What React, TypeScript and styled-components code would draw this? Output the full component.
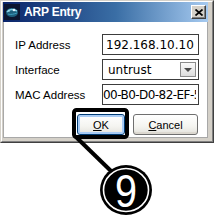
import React from 'react';
import styled, { createGlobalStyle } from 'styled-components';

const GlobalStyle = createGlobalStyle`
    html, body {
        margin: 0;
        padding: 0;
        background: #ffffff;
    }
    body {
        width: 214px;
        height: 218px;
        overflow: hidden;
        font-family: 'Liberation Sans', Arial, sans-serif;
    }
`;

const Page = styled.div`
    position: relative;
    width: 214px;
    height: 218px;
    background: #ffffff;
`;

const Window = styled.div`
    box-sizing: border-box;
    width: 214px;
    border: 1px solid;
    border-color: #d4d0c8 #404040 #404040 #d4d0c8;
`;

const Frame = styled.div`
    display: flex;
    flex-direction: column;
    border: 1px solid;
    border-color: #ffffff #808080 #808080 #ffffff;
    background: #d4d0c8;
    padding: 0 4px 3px 1px;
`;

const TitleBar = styled.div`
    display: flex;
    align-items: center;
    height: 20px;
    padding: 0 2px 0 1px;
    background: linear-gradient(to right, #0a246a 0%, #3a6ea5 55%, #a6caf0 100%);
`;

const TitleText = styled.span`
    flex: 1;
    margin-left: 4px;
    color: #ffffff;
    font-family: 'Liberation Sans', Arial, sans-serif;
    font-weight: bold;
    font-size: 12px;
    letter-spacing: -0.2px;
    line-height: 20px;
`;

const CloseButton = styled.div`
    box-sizing: border-box;
    display: flex;
    align-items: center;
    justify-content: center;
    width: 15px;
    height: 14px;
    background: #d4d0c8;
    border: 1px solid;
    border-color: #ffffff #404040 #404040 #ffffff;
    box-shadow: inset -1px -1px 0 #808080;
`;

const Body = styled.div`
    display: flex;
    flex-direction: column;
    background: #ffffff;
    border: 1px solid #a8a8a8;
    border-top: none;
    padding: 12px 8px 2px 11px;
`;

const Form = styled.div`
    display: grid;
    grid-template-columns: 87px 97px;
    grid-auto-rows: 21px;
    row-gap: 4px;
    align-items: center;
`;

const Label = styled.span`
    font-family: 'Liberation Sans', Arial, sans-serif;
    font-size: 11.5px;
    color: #000000;
`;

const Field = styled.div<{ $pad: number }>`
    box-sizing: border-box;
    display: flex;
    align-items: center;
    height: 21px;
    border: 1px solid #3c3c3c;
    padding-left: ${({ $pad }) => $pad}px;
    padding-right: 2px;
    overflow: hidden;
    white-space: nowrap;
    font-family: 'DejaVu Sans', Verdana, sans-serif;
    font-size: 12px;
    color: #000000;
    background: #ffffff;
`;

const FieldText = styled.span<{ $tight?: boolean }>`
    flex: 1;
    overflow: hidden;
    letter-spacing: ${({ $tight }) => ($tight ? '-0.55px' : '0')};
`;

const DropButton = styled.div`
    box-sizing: border-box;
    display: flex;
    align-items: center;
    justify-content: center;
    width: 16px;
    height: 15px;
    border: 1px solid #8c8c8c;
    background: linear-gradient(#fafafa, #dcdcdc);

    &::after {
        content: '';
        border-left: 4px solid transparent;
        border-right: 4px solid transparent;
        border-top: 4px solid #4a4a4a;
        margin-top: 1px;
    }
`;

const ButtonRow = styled.div`
    display: flex;
    justify-content: flex-end;
    gap: 8px;
    margin-top: 9px;
    padding-right: 1px;
`;

const Button = styled.div<{ $focused?: boolean; $width: number }>`
    box-sizing: border-box;
    display: flex;
    align-items: center;
    justify-content: center;
    width: ${({ $width }) => $width}px;
    height: 21px;
    border: 1px solid ${({ $focused }) => ($focused ? '#003c74' : '#6f6f6f')};
    border-radius: 3px;
    background: linear-gradient(#ffffff 0%, #f4f4f0 60%, #e4e2dc 100%);
    box-shadow: ${({ $focused }) =>
        $focused ? 'inset 0 0 0 2px #a8cbf5' : 'inset 0 -2px 0 #dcd8d0'};
    font-family: 'Liberation Sans', Arial, sans-serif;
    font-size: 11px;
    color: #000000;
`;

const Mnemonic = styled.span`
    text-decoration: underline;
    text-underline-offset: 1px;
`;

const Callout = styled.svg`
    position: absolute;
    left: 0;
    top: 0;
    pointer-events: none;
`;

const AppIcon = () => (
    <svg width="16" height="16" viewBox="0 0 16 16">
        <rect width="16" height="16" fill="#0c1630" />
        <ellipse cx="8" cy="8.5" rx="6" ry="4.5" fill="#1d5f7c" />
        <path d="M3 8 C5 5, 9 5, 13 7" stroke="#7fd0e6" strokeWidth="1.4" fill="none" />
        <path d="M4 10 C7 11, 10 10, 13 9" stroke="#3fa0c0" strokeWidth="1" fill="none" />
        <circle cx="10" cy="6" r="1.3" fill="#e8f6ff" />
        <circle cx="5" cy="7" r="0.8" fill="#bfe8f4" />
    </svg>
);

const CloseGlyph = () => (
    <svg width="8" height="7" viewBox="0 0 8 7">
        <path d="M0.5 0.5 L7.5 6.5 M7.5 0.5 L0.5 6.5" stroke="#000000" strokeWidth="1.7" />
    </svg>
);

const fields = [
    { label: 'IP Address', value: '192.168.10.10', pad: 3 },
    { label: 'Interface', value: 'untrust', pad: 5, select: true },
    { label: 'MAC Address', value: '00-B0-D0-82-EF-5A', pad: 0, tight: true },
];

const App = () => (
    <Page>
        <GlobalStyle />
        <Window>
            <Frame>
                <TitleBar>
                    <AppIcon />
                    <TitleText>ARP Entry</TitleText>
                    <CloseButton>
                        <CloseGlyph />
                    </CloseButton>
                </TitleBar>
                <Body>
                    <Form>
                        {fields.map((f) => (
                            <React.Fragment key={f.label}>
                                <Label>{f.label}</Label>
                                <Field $pad={f.pad}>
                                    <FieldText $tight={f.tight}>{f.value}</FieldText>
                                    {f.select && <DropButton />}
                                </Field>
                            </React.Fragment>
                        ))}
                    </Form>
                    <ButtonRow>
                        <Button $focused $width={48}>
                            <Mnemonic>O</Mnemonic>K
                        </Button>
                        <Button $width={65}>
                            <Mnemonic>C</Mnemonic>ancel
                        </Button>
                    </ButtonRow>
                </Body>
            </Frame>
        </Window>
        <Callout width="214" height="218" viewBox="0 0 214 218">
            <rect x="74" y="110" width="53" height="27" rx="2.5" fill="none" stroke="#000000" strokeWidth="4" />
            <line x1="76" y1="137" x2="112" y2="172" stroke="#000000" strokeWidth="4" />
            <ellipse cx="126" cy="190" rx="26" ry="25" fill="#000000" />
            <ellipse cx="126" cy="190" rx="22.5" ry="21.5" fill="none" stroke="#ffffff" strokeWidth="1.6" />
            <text
                x="0"
                y="0"
                transform="translate(126 206.5) scale(0.86 1)"
                textAnchor="middle"
                fill="#ffffff"
                fontFamily="'Liberation Sans', Arial, sans-serif"
                fontSize="46"
            >
                9
            </text>
        </Callout>
    </Page>
);

export default App;
